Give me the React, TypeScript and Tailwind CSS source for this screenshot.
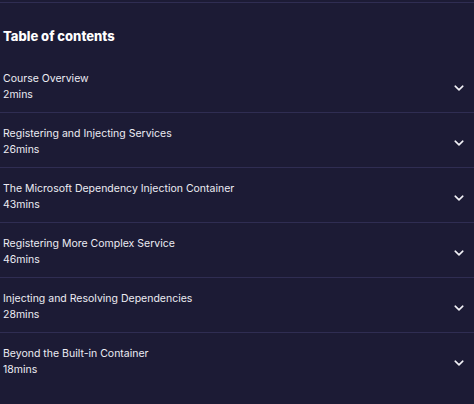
import React from 'react';

const ITEMS = [
    { title: 'Course Overview', duration: '2mins' },
    { title: 'Registering and Injecting Services', duration: '26mins' },
    { title: 'The Microsoft Dependency Injection Container', duration: '43mins' },
    { title: 'Registering More Complex Service', duration: '46mins' },
    { title: 'Injecting and Resolving Dependencies', duration: '28mins' },
    { title: 'Beyond the Built-in Container', duration: '18mins' },
];

function Chevron() {
    return (
        <svg width="10" height="6" viewBox="0 0 10 6" fill="none" className="shrink-0">
            <path d="M1.2 1.2l3.8 3.6 3.8-3.6" stroke="#f2f2f7" strokeWidth="1.6" strokeLinecap="round" strokeLinejoin="round" />
        </svg>
    );
}

export default function App() {
    return (
        <div className="w-[474px] h-[404px] overflow-hidden bg-[#1c1b35] text-[#ececf3]" style={{ fontFamily: 'Inter, "Noto Sans", sans-serif' }}>
            <div className="h-[2px]" />
            <div className="border-t border-[#2f2d52]" />
            {/* Heading */}
            <h2 className="pl-[3px] pt-[23px] pb-[12px] text-[13px] leading-[20px] font-extrabold text-white">Table of contents</h2>
            <div className="flex flex-col">
                {ITEMS.map((item, i) => (
                    <div
                        key={item.title}
                        className={`flex items-center justify-between pl-[3px] pr-[10px] pt-[13px] pb-[9px] ${i < ITEMS.length - 1 ? 'border-b border-[#2f2d52]' : ''}`}
                    >
                        <div className="flex flex-col text-[10.5px] leading-[16px]">
                            <span>{item.title}</span>
                            <span>{item.duration}</span>
                        </div>
                        <div className="pt-[2px]">
                            <Chevron />
                        </div>
                    </div>
                ))}
            </div>
        </div>
    );
}
